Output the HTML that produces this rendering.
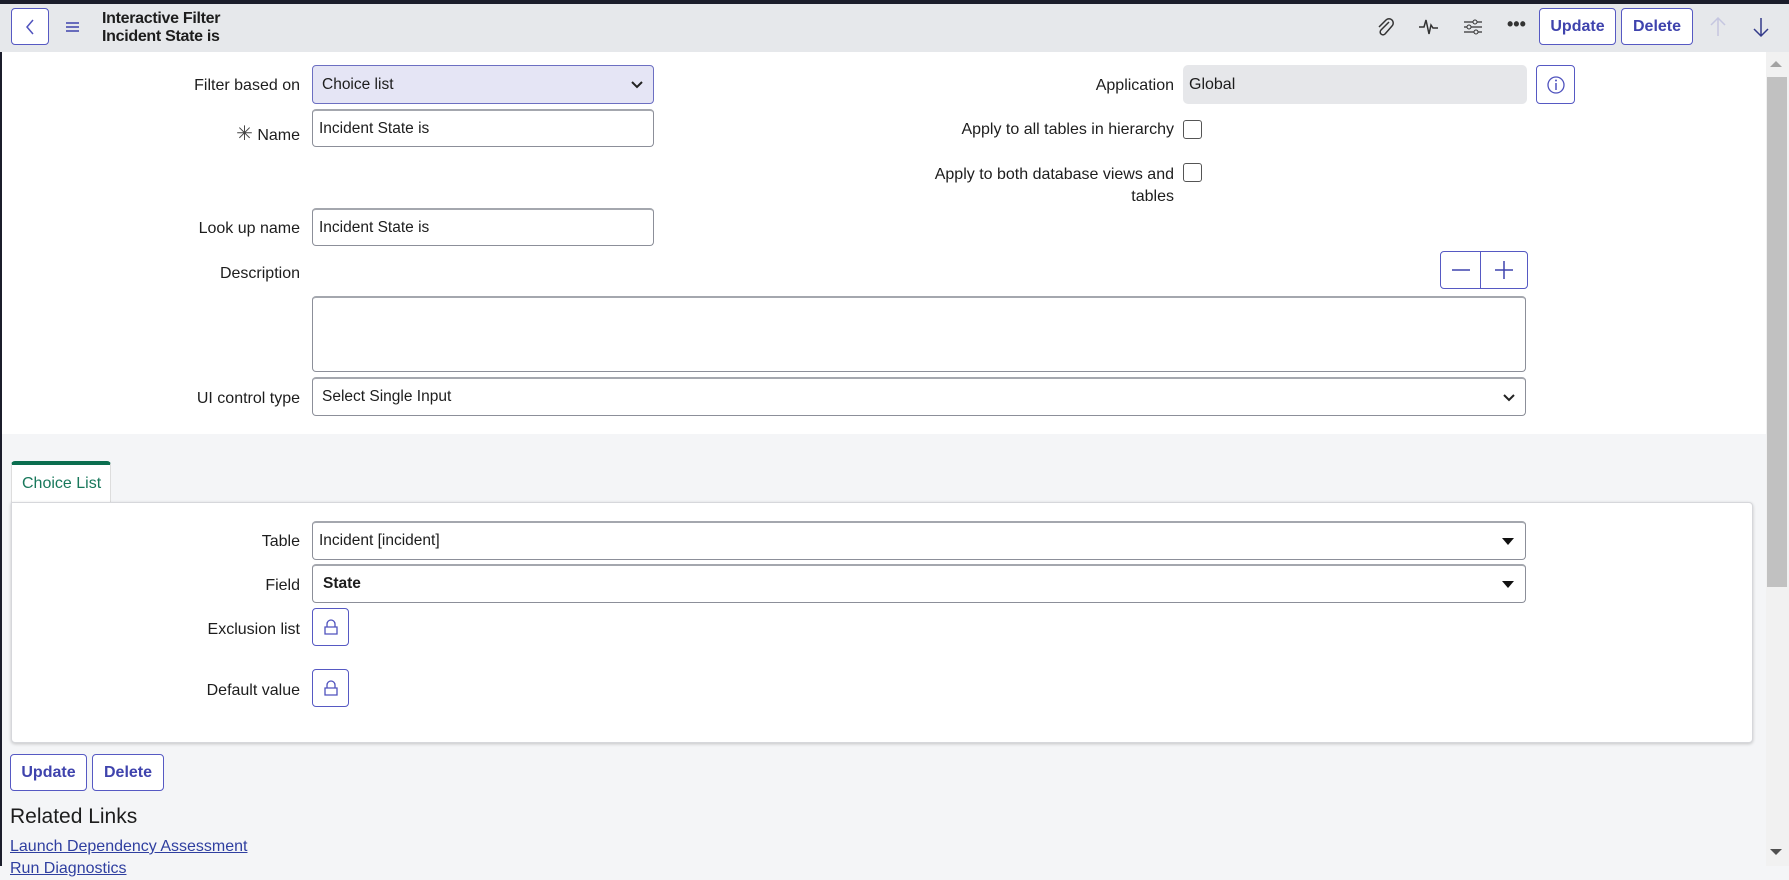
<!DOCTYPE html>
<html><head><meta charset="utf-8"><style>
*{box-sizing:border-box}
body{margin:0;width:1789px;height:866px;overflow:hidden;font-family:"Liberation Sans",sans-serif;font-size:16px;color:#1d1d1d;background:#f4f5f7;position:relative}
.a{position:absolute}
.top{left:0;top:0;width:1789px;height:4px;background:#1b1d2b}
.hdr{left:0;top:4px;width:1789px;height:48px;background:#e6e8eb}
.btn{position:absolute;border:1.5px solid #5659c3;border-radius:4px;background:#fff;color:#3f43ad;font-weight:bold;font-size:16px;display:flex;align-items:center;justify-content:center}
.lbl{position:absolute;text-align:right;width:300px;left:0;font-size:16px;margin-top:2px}
.inp{position:absolute;border:1px solid #8c8f99;border-top:2px solid #a4a7ae;border-radius:4px;background:#fff;padding-left:6px;display:flex;align-items:center;font-size:15.5px}
.cb{position:absolute;width:19px;height:19px;border:1.5px solid #555;border-radius:3px;background:#fff}
</style></head><body>
<div class="a top"></div>
<div class="a hdr"></div>
<div class="btn" style="left:11px;top:8px;width:38px;height:37px"><svg width="14" height="20"><path d="M10 3 L4 10 L10 17" stroke="#4f52bd" stroke-width="1.5" fill="none"/></svg></div>
<svg class="a" style="left:65px;top:20px" width="16" height="14"><path d="M1 3h13M1 7h13M1 11h13" stroke="#3f43ad" stroke-width="1.5"/></svg>
<div class="a" style="left:102px;top:10px;font-weight:bold;font-size:16px;line-height:18px;letter-spacing:-0.3px">Interactive Filter<br>Incident State is</div>
<svg class="a" style="left:1374px;top:16px" width="22" height="22"><path d="M15 6 L7 14 a2.5 2.5 0 0 0 4 4 L18 10 a4 4 0 0 0 -6 -6 L5 11" stroke="#333" stroke-width="1.5" fill="none"/></svg>
<svg class="a" style="left:1418px;top:17px" width="22" height="20"><path d="M1 10h5l2-7 3 14 2-9 2 3h5" stroke="#333" stroke-width="1.5" fill="none"/></svg>
<svg class="a" style="left:1462px;top:17px" width="22" height="20"><path d="M2 5h18M2 10h18M2 15h18" stroke="#333" stroke-width="1.3"/><circle cx="13" cy="5" r="2" fill="#e6e8eb" stroke="#333"/><circle cx="7" cy="10" r="2" fill="#e6e8eb" stroke="#333"/><circle cx="14" cy="15" r="2" fill="#e6e8eb" stroke="#333"/></svg>
<div class="a" style="left:1507px;top:14px;font-size:18px;font-weight:bold;color:#333">•••</div>
<div class="btn" style="left:1539px;top:8px;width:77px;height:37px">Update</div>
<div class="btn" style="left:1621px;top:8px;width:72px;height:37px">Delete</div>
<svg class="a" style="left:1708px;top:16px" width="20" height="22"><path d="M10 2v18M3 9l7-7 7 7" stroke="#c5c6e0" stroke-width="1.5" fill="none"/></svg>
<svg class="a" style="left:1751px;top:16px" width="20" height="22"><path d="M10 2v18M3 13l7 7 7-7" stroke="#333a8a" stroke-width="1.5" fill="none"/></svg>

<div class="a" style="left:0;top:52px;width:1766px;height:382px;background:#fff;border-left:2px solid #1b1d2b"></div>
<div class="a" style="left:1766px;top:52px;width:23px;height:814px;background:#f1f1f1"></div>
<div class="a" style="left:1767px;top:77px;width:20px;height:510px;background:#c1c1c1"></div>
<svg class="a" style="left:1769px;top:60px" width="14" height="8"><path d="M1 7L7 1 13 7z" fill="#a3a3a3"/></svg>
<svg class="a" style="left:1769px;top:848px" width="14" height="8"><path d="M1 1L7 7 13 1z" fill="#505050"/></svg>

<div class="lbl" style="top:75px">Filter based on</div>
<div class="inp" style="left:312px;top:65px;width:342px;height:39px;background:#e5e5f5;border:1.5px solid #6c6fc2;padding-left:9px">Choice list<svg style="position:absolute;right:9px;top:14px" width="14" height="10"><path d="M2 2l5 5 5-5" stroke="#222" stroke-width="2" fill="none"/></svg></div>
<div class="lbl" style="top:119px"><span style="font-size:20px;color:#444">✳</span> Name</div>
<div class="inp" style="left:312px;top:109px;width:342px;height:38px">Incident State is</div>
<div class="lbl" style="top:218px">Look up name</div>
<div class="inp" style="left:312px;top:208px;width:342px;height:38px">Incident State is</div>
<div class="lbl" style="top:263px">Description</div>
<div class="inp" style="left:312px;top:296px;width:1214px;height:76px"></div>
<div class="lbl" style="top:388px">UI control type</div>
<div class="inp" style="left:312px;top:377px;width:1214px;height:39px;padding-left:9px">Select Single Input<svg style="position:absolute;right:9px;top:14px" width="14" height="10"><path d="M2 2l5 5 5-5" stroke="#222" stroke-width="2" fill="none"/></svg></div>

<div class="a" style="left:874px;top:77px;width:300px;text-align:right">Application</div>
<div class="a" style="left:1183px;top:65px;width:344px;height:39px;background:#e6e7ea;border-radius:5px;padding:11px 6px">Global</div>
<div class="btn" style="left:1536px;top:65px;width:39px;height:39px"><svg width="20" height="20"><circle cx="10" cy="10" r="8" stroke="#4f52bd" stroke-width="1.3" fill="none"/><path d="M10 8v7" stroke="#4f52bd" stroke-width="1.5"/><circle cx="10" cy="5.5" r="1" fill="#4f52bd"/></svg></div>
<div class="a" style="left:874px;top:121px;width:300px;text-align:right">Apply to all tables in hierarchy</div>
<div class="cb" style="left:1183px;top:120px"></div>
<div class="a" style="left:874px;top:164px;width:300px;text-align:right;line-height:22px">Apply to both database views and<br>tables</div>
<div class="cb" style="left:1183px;top:163px"></div>
<div class="btn" style="left:1440px;top:251px;width:88px;height:38px;justify-content:flex-start"><div style="width:40px;height:100%;border-right:1.5px solid #5659c3;display:flex;align-items:center;justify-content:center"><svg width="18" height="4"><path d="M0 2h18" stroke="#3f43ad" stroke-width="1.5"/></svg></div><div style="flex:1;display:flex;align-items:center;justify-content:center"><svg width="18" height="18"><path d="M0 9h18M9 0v18" stroke="#3f43ad" stroke-width="1.5"/></svg></div></div>

<div class="a" style="left:0;top:434px;width:2px;height:432px;background:#1b1d2b"></div>
<div class="a" style="left:11px;top:461px;width:100px;height:42px;background:#fff;border-top:4px solid #0b6e4f;border-radius:4px 4px 0 0;border-left:1px solid #ddd;border-right:1px solid #ddd;color:#18785b;padding:10px 0 0 10px">Choice List</div>
<div class="a" style="left:11px;top:502px;width:1742px;height:241px;background:#fff;border:1px solid #d6d7db;border-radius:0 4px 4px 4px;box-shadow:0 1px 3px rgba(0,0,0,.2)"></div>
<div class="lbl" style="top:531px">Table</div>
<div class="inp" style="left:312px;top:521px;width:1214px;height:39px">Incident [incident]<svg style="position:absolute;right:11px;top:15px" width="12" height="8"><path d="M0 0h12L6 7z" fill="#111"/></svg></div>
<div class="lbl" style="top:575px">Field</div>
<div class="inp" style="left:312px;top:564px;width:1214px;height:39px;font-weight:bold;padding-left:10px">State<svg style="position:absolute;right:11px;top:15px" width="12" height="8"><path d="M0 0h12L6 7z" fill="#111"/></svg></div>
<div class="lbl" style="top:619px">Exclusion list</div>
<div class="btn" style="left:312px;top:608px;width:37px;height:38px"><svg width="16" height="18"><path d="M4 9V6a4 4 0 0 1 8 0v3M2 9h12v7H2z" stroke="#4f52bd" stroke-width="1.3" fill="none"/></svg></div>
<div class="lbl" style="top:680px">Default value</div>
<div class="btn" style="left:312px;top:669px;width:37px;height:38px"><svg width="16" height="18"><path d="M4 9V6a4 4 0 0 1 8 0v3M2 9h12v7H2z" stroke="#4f52bd" stroke-width="1.3" fill="none"/></svg></div>
<div class="btn" style="left:10px;top:754px;width:77px;height:37px">Update</div>
<div class="btn" style="left:92px;top:754px;width:72px;height:37px">Delete</div>
<div class="a" style="left:10px;top:805px;font-size:21px">Related Links</div>
<div class="a" style="left:10px;top:836px;color:#2f3fa0;text-decoration:underline;font-size:16px;line-height:22px">Launch Dependency Assessment<br>Run Diagnostics</div>
</body></html>
